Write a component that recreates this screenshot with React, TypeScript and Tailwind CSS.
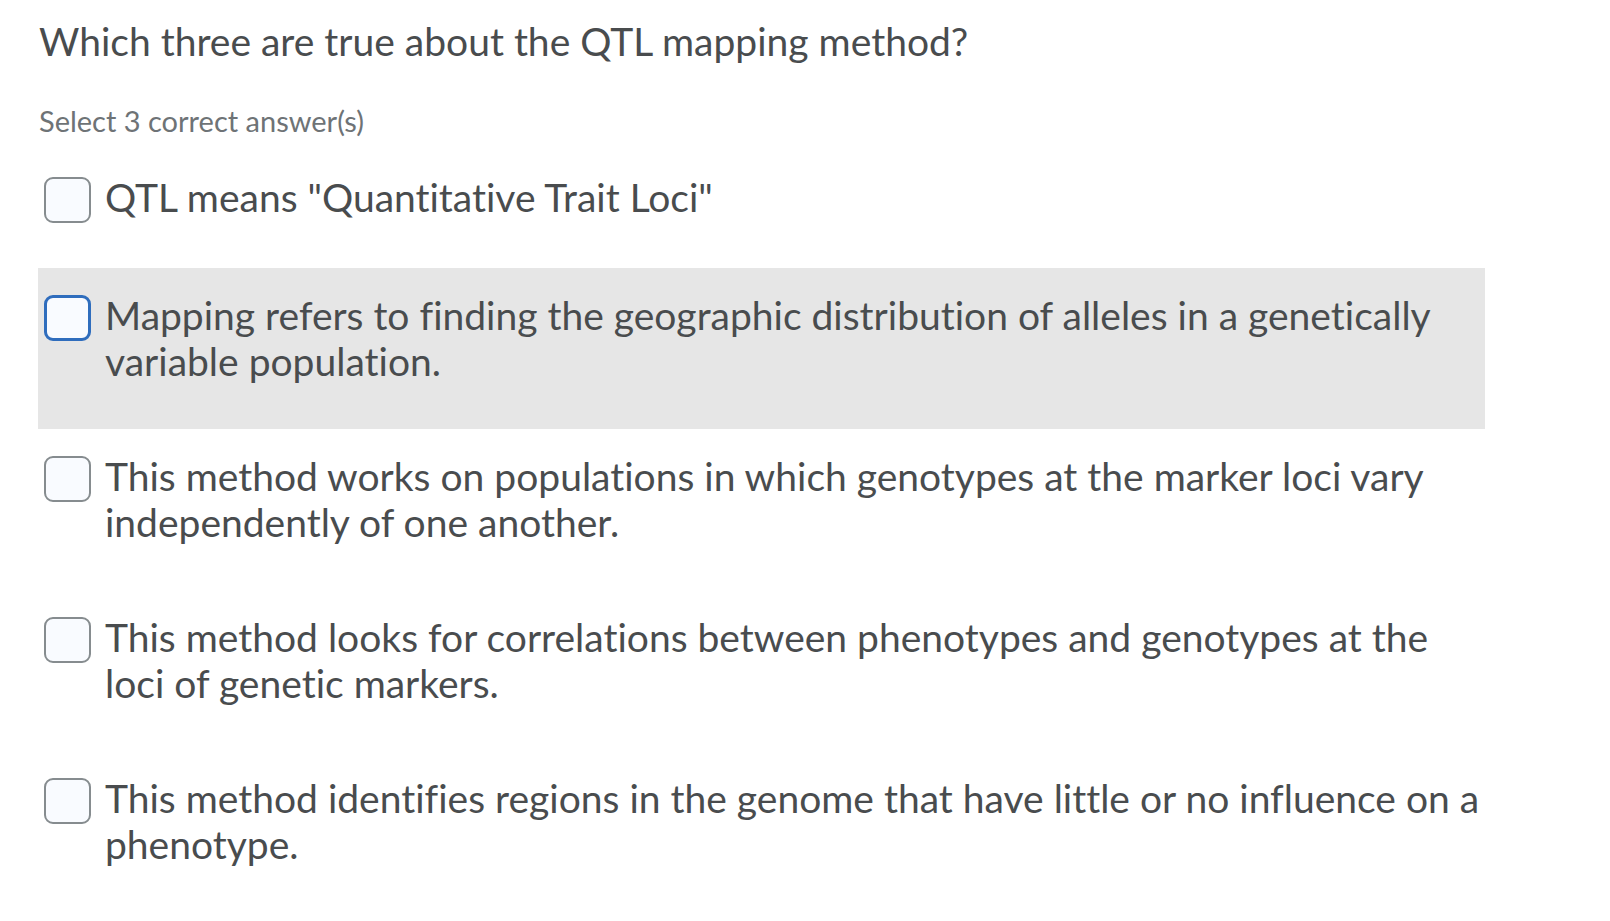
import { useState } from 'react';

const options = [
  'QTL means "Quantitative Trait Loci"',
  'Mapping refers to finding the geographic distribution of alleles in a genetically variable population.',
  'This method works on populations in which genotypes at the marker loci vary independently of one another.',
  'This method looks for correlations between phenotypes and genotypes at the loci of genetic markers.',
  'This method identifies regions in the genome that have little or no influence on a phenotype.',
];

export default function App() {
  const [focused] = useState(1);

  return (
    <div className="min-h-screen bg-white text-[#494c4e] font-['Lato',sans-serif] [font-variant-ligatures:none]">
      <div className="pl-[39px] pt-[18px]">
        <h1 className="text-[39px] leading-[46px]">Which three are true about the QTL mapping method?</h1>
        <p className="mt-[41px] text-[29px] leading-[32px] text-[#6e7376]">Select 3 correct answer(s)</p>
      </div>

      <div className="mt-[13px] w-[1447px] ml-[38px]">
        {options.map((text, i) => (
          <label
            key={i}
            className={`flex items-start gap-[14px] pl-[6px] pt-[24px] pb-[45px] ${
              i === focused ? 'bg-[#e6e6e6]' : ''
            }`}
          >
            <span
              className={`mt-[3px] shrink-0 w-[47px] h-[46px] rounded-[9px] bg-[#f9fbff] ${
                i === focused ? 'border-[3px] border-[#2f6dbd]' : 'border-2 border-[#868c8f]'
              }`}
            />
            <span className="-mr-[6px] text-[39px] leading-[46px]">{text}</span>
          </label>
        ))}
      </div>
    </div>
  );
}
